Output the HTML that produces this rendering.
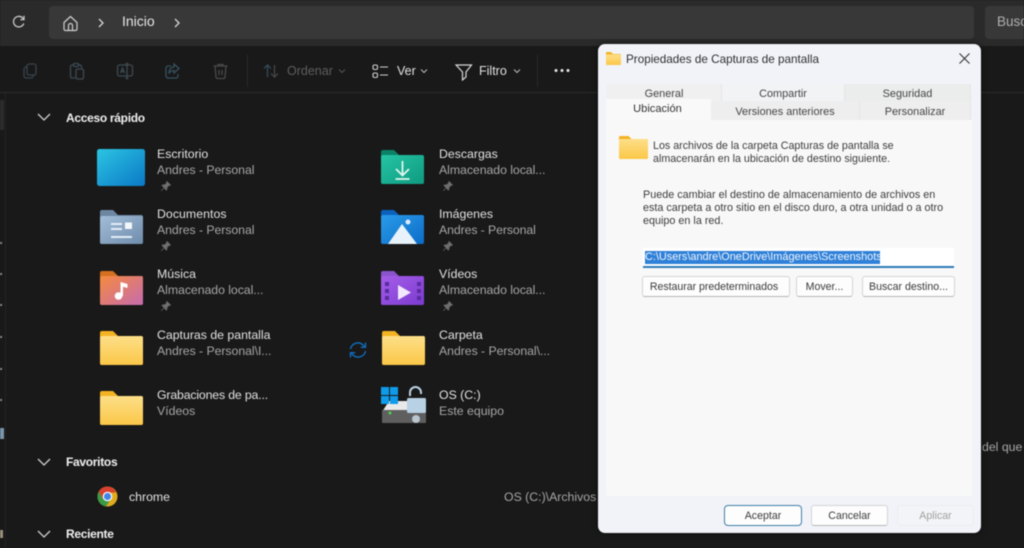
<!DOCTYPE html>
<html lang="es"><head><meta charset="utf-8"><title>Inicio</title>
<style>
html,body{margin:0;padding:0;background:#191919;}
#r{position:relative;width:1024px;height:548px;overflow:hidden;background:#191919;font-family:"Liberation Sans",sans-serif;filter:blur(.45px);}
#r div,#r svg{position:absolute;}
.t{white-space:nowrap;font-size:12.3px;line-height:15px;}
.n{color:#e2e2e2;margin-top:1px;}.s{color:#a6a6a6;margin-top:1px;}
.h{color:#f0f0f0;font-weight:bold;font-size:12px;letter-spacing:-.3px;margin-top:1px;}
.d{color:#3c3c3c;white-space:nowrap;font-size:10.8px;line-height:13px;}
.b{box-sizing:border-box;background:#fdfdfd;border:1px solid #d4d4d4;border-bottom-color:#b5b5b5;border-radius:3px;text-align:center;font-size:10.6px;color:#3a3a3a;white-space:nowrap;}
.tab{box-sizing:border-box;background:#f0f0f1;text-align:center;font-size:10.9px;line-height:19px;color:#444;border-right:1px solid #e6e6e6;white-space:nowrap;}
.l{letter-spacing:-.05px;}
.dot{width:2px;height:2px;left:0;background:#8a8a8a;}
</style></head><body><div id="r">
<svg width="0" height="0" style="left:0;top:0"><defs>
<linearGradient id="fy" x1="0" y1="0" x2="0" y2="1"><stop offset="0" stop-color="#fddf88"/><stop offset="1" stop-color="#fbc748"/></linearGradient>
<linearGradient id="fb" x1="0" y1="0" x2="1" y2="1"><stop offset="0" stop-color="#2bc5e2"/><stop offset="1" stop-color="#0b78c6"/></linearGradient>
<linearGradient id="fg" x1="0" y1="0" x2="1" y2="1"><stop offset="0" stop-color="#25c4a4"/><stop offset="1" stop-color="#0f9a80"/></linearGradient>
<linearGradient id="fi" x1="0" y1="0" x2="1" y2="1"><stop offset="0" stop-color="#2a9be8"/><stop offset="1" stop-color="#0c6cc8"/></linearGradient>
<linearGradient id="fm" x1="0" y1="0" x2="1" y2="1"><stop offset="0" stop-color="#f58a3e"/><stop offset="1" stop-color="#c66bb0"/></linearGradient>
<linearGradient id="fv" x1="0" y1="0" x2="1" y2="1"><stop offset="0" stop-color="#a45ee8"/><stop offset="1" stop-color="#7c3bd0"/></linearGradient>
<linearGradient id="fd" x1="0" y1="0" x2="1" y2="1"><stop offset="0" stop-color="#a2bdd8"/><stop offset="1" stop-color="#6f8cab"/></linearGradient>
<symbol id="pin" viewBox="0 0 12 12"><path d="M7 1l4 4-1 .8-.8-.2-2 2 .1 2-1 1-2.2-2.4L1.500 11 1 10.500l2.800-2.700L1.500 5.500l1-1 2 .1 2-2-.2-.8z" fill="#6e6e6e"/></symbol>
</defs></svg>

<!-- top bar -->
<div style="left:0;top:0;width:1024px;height:46px;background:#2a2a2a"></div>
<div style="left:49px;top:6px;width:925px;height:33px;background:#383838;border-radius:4px"></div>
<div style="left:985px;top:6px;width:39px;height:33px;background:#383838;border-radius:4px 0 0 4px"></div>
<div class="t" style="left:997px;top:14px;color:#b0b0b0;font-size:13.5px">Busc</div>
<svg style="left:11px;top:14px" width="16" height="16" viewBox="0 0 16 16" fill="none" stroke="#c8c8c8" stroke-width="1.300"><path d="M12.800 9.500A5.300 5.300 0 1 1 11.500 3.800L13 5.500"/><path d="M13 1.800v3.800H9.400"/></svg>
<svg style="left:62px;top:15px" width="17" height="17" viewBox="0 0 17 17" fill="none" stroke="#cfcfcf" stroke-width="1.200"><path d="M2 7.500L8.500 1.500 15 7.500V14a1.500 1.500 0 0 1-1.500 1.500H3.500A1.500 1.500 0 0 1 2 14z"/><path d="M6.500 15.500V10.500a2 2 0 0 1 4 0v5"/></svg>
<svg style="left:97px;top:18px" width="8" height="10" viewBox="0 0 8 10" fill="none" stroke="#d5d5d5" stroke-width="1.300"><path d="M2 1l4 4-4 4"/></svg>
<div class="t" style="left:122px;top:14px;color:#e6e6e6;font-size:14px">Inicio</div>
<svg style="left:173px;top:18px" width="8" height="10" viewBox="0 0 8 10" fill="none" stroke="#d5d5d5" stroke-width="1.300"><path d="M2 1l4 4-4 4"/></svg>

<!-- toolbar -->
<div style="left:0;top:92px;width:1024px;height:1px;background:#2c2c2c"></div>
<svg style="left:22px;top:62px" width="16" height="18" viewBox="0 0 16 18" fill="none" stroke="#37444d" stroke-width="1.300"><rect x="5" y="2" width="9" height="11" rx="2"/><path d="M5 5H4a2 2 0 0 0-2 2v7a2 2 0 0 0 2 2h5a2 2 0 0 0 2-2v-1"/></svg>
<svg style="left:69px;top:62px" width="16" height="18" viewBox="0 0 16 18" fill="none" stroke="#3d4a52" stroke-width="1.300"><path d="M5 3H3a1.500 1.500 0 0 0-1.500 1.500v10A1.500 1.500 0 0 0 3 16h3"/><path d="M10 3h1a1.500 1.500 0 0 1 1.500 1.500V6"/><rect x="4.500" y="1.500" width="5" height="3" rx="1"/><rect x="7" y="7" width="7.500" height="10" rx="1.500"/></svg>
<svg style="left:116px;top:62px" width="18" height="18" viewBox="0 0 18 18" fill="none" stroke="#3d4a52" stroke-width="1.300"><rect x="1.500" y="3" width="15" height="11" rx="2"/><path d="M4.500 11l2-5 2 5M5.200 9.500h2.600M11 1.500v15M9.500 1.500h3M9.500 16.500h3"/></svg>
<svg style="left:164px;top:62px" width="17" height="18" viewBox="0 0 17 18" fill="none" stroke="#37505f" stroke-width="1.300"><path d="M7 4H4a2 2 0 0 0-2 2v8a2 2 0 0 0 2 2h8a2 2 0 0 0 2-2v-2"/><path d="M10 2l5 4.500-5 4.500V8.500c-2.500 0-4 1-5 3 0-4 2-6.500 5-6.500z"/></svg>
<svg style="left:212px;top:62px" width="17" height="18" viewBox="0 0 17 18" fill="none" stroke="#4a4a4a" stroke-width="1.300"><path d="M1.500 4h14M6 4V2.500h5V4M3 4l1 11a1.500 1.500 0 0 0 1.500 1.500h6A1.500 1.500 0 0 0 13 15l1-11M7 8v5M10 8v5"/></svg>
<div style="left:247px;top:55px;width:1px;height:32px;background:#2b2b2b"></div>
<svg style="left:262px;top:63px" width="18" height="16" viewBox="0 0 18 16" fill="none" stroke-width="1.200"><path d="M5.500 14V2M2 5.500L5.500 2 9 5.500" stroke="#37505f"/><path d="M12.500 2v12M9 10.500l3.500 3.500 3.500-3.500" stroke="#4a4a4a"/></svg>
<div class="t" style="left:287px;top:64px;color:#5e5e5e;font-size:12.5px">Ordenar</div>
<svg style="left:338px;top:68px" width="8" height="6" viewBox="0 0 8 6" fill="none" stroke="#555" stroke-width="1"><path d="M1 1.500l3 3 3-3"/></svg>
<svg style="left:372px;top:64px" width="18" height="15" viewBox="0 0 18 15" fill="none" stroke="#d0d0d0" stroke-width="1.100"><rect x="1" y="1" width="4.500" height="4.500" rx="1.500"/><rect x="1" y="9" width="4.500" height="4.500" rx="1.500"/><path d="M8 3h8M8 11h8"/></svg>
<div class="t" style="left:397px;top:64px;color:#e0e0e0;font-size:12.5px">Ver</div>
<svg style="left:420px;top:68px" width="8" height="6" viewBox="0 0 8 6" fill="none" stroke="#bbb" stroke-width="1"><path d="M1 1.500l3 3 3-3"/></svg>
<svg style="left:455px;top:63px" width="18" height="18" viewBox="0 0 18 18" fill="none" stroke="#d8d8d8" stroke-width="1.200"><path d="M1 2h15.500L11 9v5l-3.500 3V9z"/></svg>
<div class="t" style="left:479px;top:64px;color:#e0e0e0;font-size:12.5px">Filtro</div>
<svg style="left:513px;top:68px" width="8" height="6" viewBox="0 0 8 6" fill="none" stroke="#bbb" stroke-width="1"><path d="M1 1.500l3 3 3-3"/></svg>
<div style="left:537px;top:55px;width:1px;height:32px;background:#2b2b2b"></div>
<svg style="left:554px;top:68px" width="16" height="5" viewBox="0 0 16 5" fill="#e6e6e6"><circle cx="2" cy="2.500" r="1.500"/><circle cx="8" cy="2.500" r="1.500"/><circle cx="14" cy="2.500" r="1.500"/></svg>

<!-- sidebar sliver -->
<div style="left:0;top:100px;width:4px;height:30px;background:#2c2c2c"></div>
<div style="left:5px;top:93px;width:1px;height:455px;background:#232323"></div>
<div class="dot" style="top:242px"></div><div class="dot" style="top:273px"></div><div class="dot" style="top:304px"></div><div class="dot" style="top:336px"></div><div class="dot" style="top:368px"></div><div class="dot" style="top:399px"></div>
<div style="left:0;top:428px;width:4px;height:11px;background:#7a95ab"></div>
<div style="left:0;top:530px;width:3px;height:8px;background:#9a9080"></div>

<!-- right background hints -->
<div class="t" style="left:982px;top:440px;color:#a8a8a8">del que s</div>

<!-- sections -->
<svg style="left:37px;top:113px" width="14" height="9" viewBox="0 0 14 9" fill="none" stroke="#cfcfcf" stroke-width="1.300"><path d="M1 1l6 6 6-6"/></svg>
<div class="t h" style="left:66px;top:110px">Acceso rápido</div>
<svg style="left:37px;top:458px" width="14" height="9" viewBox="0 0 14 9" fill="none" stroke="#cfcfcf" stroke-width="1.300"><path d="M1 1l6 6 6-6"/></svg>
<div class="t h" style="left:66px;top:454px">Favoritos</div>
<svg style="left:37px;top:530px" width="14" height="9" viewBox="0 0 14 9" fill="none" stroke="#cfcfcf" stroke-width="1.300"><path d="M1 1l6 6 6-6"/></svg>
<div class="t h" style="left:66px;top:526px">Reciente</div>

<!-- Escritorio -->
<svg style="left:97px;top:149px" width="48" height="38" viewBox="0 0 48 38"><rect width="48" height="37" rx="2.500" fill="url(#fb)"/></svg>
<div class="t n" style="left:157px;top:146px">Escritorio</div>
<div class="t s" style="left:157px;top:162px;letter-spacing:-.06px">Andres - Personal</div>
<svg style="left:160px;top:180px" width="12" height="12"><use href="#pin"/></svg>

<!-- Documentos -->
<svg style="left:100px;top:210px" width="43" height="34" viewBox="0 0 43 34"><path d="M2 0h11l5 5h23a2 2 0 0 1 2 2v25a2 2 0 0 1-2 2H2a2 2 0 0 1-2-2V2a2 2 0 0 1 2-2z" fill="#6d87a3"/><rect y="6" width="43" height="28" rx="2" fill="url(#fd)"/><path d="M11 13h11v2H11zM11 18h11v2H11zM11 26h21v2H11z" fill="#e4edf6"/><rect x="25" y="12.500" width="7" height="6.500" fill="#f3f7fb"/></svg>
<div class="t n" style="left:157px;top:206px;letter-spacing:.05px">Documentos</div>
<div class="t s" style="left:157px;top:222px;letter-spacing:-.06px">Andres - Personal</div>
<svg style="left:160px;top:240px" width="12" height="12"><use href="#pin"/></svg>

<!-- Música -->
<svg style="left:100px;top:271px" width="43" height="34" viewBox="0 0 43 34"><path d="M2 0h11l5 5h23a2 2 0 0 1 2 2v25a2 2 0 0 1-2 2H2a2 2 0 0 1-2-2V2a2 2 0 0 1 2-2z" fill="#d4701f"/><rect y="5" width="43" height="29" rx="2" fill="url(#fm)"/><circle cx="18.500" cy="25" r="3.800" fill="#fff"/><path d="M20.500 25V11l7 2v4l-4.500-1.200V25z" fill="#fff"/></svg>
<div class="t n" style="left:157px;top:266px">Música</div>
<div class="t s l" style="left:157px;top:282px">Almacenado local...</div>
<svg style="left:160px;top:300px" width="12" height="12"><use href="#pin"/></svg>

<!-- Capturas -->
<svg style="left:100px;top:331px" width="43" height="34" viewBox="0 0 43 34"><path d="M2 0h11l5 5h23a2 2 0 0 1 2 2v25a2 2 0 0 1-2 2H2a2 2 0 0 1-2-2V2a2 2 0 0 1 2-2z" fill="#f3b322"/><rect y="5" width="43" height="29" rx="2" fill="url(#fy)"/></svg>
<div class="t n" style="left:157px;top:327px">Capturas de pantalla</div>
<div class="t s" style="left:157px;top:343px;letter-spacing:-.05px">Andres - Personal\I...</div>

<!-- Grabaciones -->
<svg style="left:100px;top:391px" width="43" height="34" viewBox="0 0 43 34"><path d="M2 0h11l5 5h23a2 2 0 0 1 2 2v25a2 2 0 0 1-2 2H2a2 2 0 0 1-2-2V2a2 2 0 0 1 2-2z" fill="#f3b322"/><rect y="5" width="43" height="29" rx="2" fill="url(#fy)"/></svg>
<div class="t n" style="left:157px;top:387px;letter-spacing:-.16px">Grabaciones de pa...</div>
<div class="t s" style="left:157px;top:403px">Vídeos</div>

<!-- Descargas -->
<svg style="left:381px;top:150px" width="43" height="34" viewBox="0 0 43 34"><path d="M2 0h11l5 5h23a2 2 0 0 1 2 2v25a2 2 0 0 1-2 2H2a2 2 0 0 1-2-2V2a2 2 0 0 1 2-2z" fill="#0b8267"/><rect y="5" width="43" height="29" rx="2" fill="url(#fg)"/><path d="M21.500 11v14M15 19l6.500 6.500L28 19M14.500 29h14" fill="none" stroke="#dff7ef" stroke-width="1.800"/></svg>
<div class="t n" style="left:439px;top:146px">Descargas</div>
<div class="t s l" style="left:439px;top:162px">Almacenado local...</div>
<svg style="left:442px;top:180px" width="12" height="12"><use href="#pin"/></svg>

<!-- Imágenes -->
<svg style="left:381px;top:210px" width="43" height="34" viewBox="0 0 43 34"><path d="M2 0h11l5 5h23a2 2 0 0 1 2 2v25a2 2 0 0 1-2 2H2a2 2 0 0 1-2-2V2a2 2 0 0 1 2-2z" fill="#0a62bd"/><rect y="5" width="43" height="29" rx="2" fill="url(#fi)"/><path d="M7 34l14-20 15 20z" fill="#e8f2fb"/><circle cx="27" cy="12" r="2.500" fill="#dcecfa"/></svg>
<div class="t n" style="left:439px;top:206px">Imágenes</div>
<div class="t s" style="left:439px;top:222px;letter-spacing:-.1px">Andres - Personal</div>
<svg style="left:442px;top:240px" width="12" height="12"><use href="#pin"/></svg>

<!-- Vídeos -->
<svg style="left:381px;top:271px" width="43" height="34" viewBox="0 0 43 34"><path d="M2 0h11l5 5h23a2 2 0 0 1 2 2v25a2 2 0 0 1-2 2H2a2 2 0 0 1-2-2V2a2 2 0 0 1 2-2z" fill="#8a55cc"/><rect y="5" width="43" height="29" rx="2" fill="url(#fv)"/><path d="M17 14l13 7.500L17 29z" fill="#f3e9ff"/><path d="M4 11h4v4H4zM4 18h4v4H4zM4 25h4v4H4zM36 11h4v4h-4zM36 18h4v4h-4zM36 25h4v4h-4z" fill="#5a2aa0"/></svg>
<div class="t n" style="left:439px;top:266px">Vídeos</div>
<div class="t s l" style="left:439px;top:282px">Almacenado local...</div>
<svg style="left:442px;top:300px" width="12" height="12"><use href="#pin"/></svg>

<!-- Sync + Carpeta -->
<svg style="left:349px;top:341px" width="18" height="18" viewBox="0 0 18 18" fill="none" stroke="#0f6cbd" stroke-width="1.400"><path d="M1.500 8A7.500 7.500 0 0 1 14.500 4.500L16 6"/><path d="M16.500 1.500V6.300H11.800"/><path d="M16.500 10A7.500 7.500 0 0 1 3.500 13.500L2 12"/><path d="M1.500 16.500V11.700H6.200"/></svg>
<svg style="left:382px;top:331px" width="43" height="34" viewBox="0 0 43 34"><path d="M2 0h11l5 5h23a2 2 0 0 1 2 2v25a2 2 0 0 1-2 2H2a2 2 0 0 1-2-2V2a2 2 0 0 1 2-2z" fill="#f3b322"/><rect y="5" width="43" height="29" rx="2" fill="url(#fy)"/></svg>
<div class="t n" style="left:439px;top:327px">Carpeta</div>
<div class="t s" style="left:439px;top:343px;letter-spacing:-.05px">Andres - Personal\...</div>

<!-- OS (C:) -->
<svg style="left:380px;top:386px" width="48" height="38" viewBox="0 0 48 38"><path d="M9 15h28l9 11v9a2 2 0 0 1-2 2H4a2 2 0 0 1-2-2v-9z" fill="#e9e9e9"/><path d="M2 24h44v11a2 2 0 0 1-2 2H4a2 2 0 0 1-2-2z" fill="#5f5f5f"/><circle cx="10" cy="27" r="1.500" fill="#4fd14f"/><path d="M1 1h8v8H1zM10 1h8v8h-8zM1 10h8v8H1zM10 10h8v8h-8z" fill="#0f9bea"/><path d="M30 10V6.500a5.500 5.500 0 0 1 11 0v1.500" fill="none" stroke="#bcd3e6" stroke-width="2"/><rect x="27" y="12" width="19" height="15" rx="1.500" fill="#b9d1e4"/><circle cx="36" cy="33" r="4" fill="#b9c6d0"/></svg>
<div class="t n" style="left:439px;top:387px">OS (C:)</div>
<div class="t s" style="left:439px;top:403px">Este equipo</div>

<!-- chrome -->
<svg style="left:97px;top:486px" width="21" height="21" viewBox="0 0 21 21"><circle cx="10.500" cy="10.500" r="10" fill="#e0aa1f"/><path d="M10.500 .5A10 10 0 0 0 1.800 5.500L6 13 10.500 6.500H19.200A10 10 0 0 0 10.500 .5z" fill="#d9402f"/><path d="M1.800 5.500A10 10 0 0 0 9 20.400L13.500 13.500 6 13z" fill="#3a9a45"/><circle cx="10.500" cy="10.500" r="4.800" fill="#fff"/><circle cx="10.500" cy="10.500" r="3.600" fill="#4285e8"/></svg>
<div class="t n" style="left:129px;top:489px">chrome</div>
<div class="t s" style="left:504px;top:489px">OS (C:)\Archivos de</div>

<!-- dialog -->
<div style="left:598px;top:44px;width:383px;height:489px;background:#f1f3f8;border-radius:7px;box-shadow:0 0 6px rgba(0,0,0,.6)"></div>
<svg style="left:606px;top:52px" width="15" height="13" viewBox="0 0 15 13"><path d="M1 0h4l2 2h7a1 1 0 0 1 1 1v9a1 1 0 0 1-1 1H1a1 1 0 0 1-1-1V1a1 1 0 0 1 1-1z" fill="#f3b322"/><rect y="2.500" width="15" height="10.500" rx="1" fill="url(#fy)"/></svg>
<div class="t" style="left:626px;top:52px;color:#2e2e2e;font-size:11.7px">Propiedades de Capturas de pantalla</div>
<svg style="left:959px;top:53px" width="11" height="11" viewBox="0 0 11 11" fill="none" stroke="#333" stroke-width="1.100"><path d="M.5.500l10 10M10.500.500l-10 10"/></svg>

<!-- tabs -->
<div class="tab" style="left:607px;top:84px;width:115px;height:17px;line-height:20px">General</div>
<div class="tab" style="left:722px;top:84px;width:123px;height:17px;line-height:20px;background:#f2f3f5">Compartir</div>
<div class="tab" style="left:845px;top:84px;width:126px;height:17px;line-height:20px;background:#ebecec">Seguridad</div>
<div class="tab" style="left:711px;top:101px;width:149px;height:19px;line-height:22px;background:#eeeeee">Versiones anteriores</div>
<div class="tab" style="left:860px;top:101px;width:111px;height:19px;line-height:22px;background:#eeeeee">Personalizar</div>
<div class="tab" style="left:606px;top:99px;width:105px;height:22px;line-height:21px;background:#f9f9f9;color:#333;border:0;font-size:11.1px;padding-right:2px">Ubicación</div>

<!-- panel -->
<div style="left:606px;top:120px;width:366px;height:376px;background:#f8f8f8"></div>
<svg style="left:619px;top:136px" width="29" height="23" viewBox="0 0 29 23"><path d="M1.500 0h8l3 3h15a1.500 1.500 0 0 1 1.500 1.500v17a1.500 1.500 0 0 1-1.500 1.500h-26A1.500 1.500 0 0 1 0 21.500v-20A1.500 1.500 0 0 1 1.500 0z" fill="#f3b322"/><rect y="3" width="29" height="20" rx="1" fill="url(#fy)"/></svg>
<div class="d" style="left:653px;top:140px;font-size:10.7px">Los archivos de la carpeta Capturas de pantalla se</div>
<div class="d" style="left:653px;top:153px;font-size:10.7px">almacenarán en la ubicación de destino siguiente.</div>
<div class="d" style="left:643px;top:189px">Puede cambiar el destino de almacenamiento de archivos en</div>
<div class="d" style="left:643px;top:202px">esta carpeta a otro sitio en el disco duro, a otra unidad o a otro</div>
<div class="d" style="left:643px;top:215px">equipo en la red.</div>

<div style="left:643px;top:248px;width:311px;height:18px;background:#fff"></div>
<div style="left:643px;top:266px;width:311px;height:2px;background:#2b7ab8"></div>
<div style="left:645px;top:251px;width:235px;height:13px;background:#2f80d8"></div>
<div class="t" style="left:645px;top:250px;color:#f2f6fb;font-size:10.9px">C:\Users\andre\OneDrive\Imágenes\Screenshots</div>

<div class="b" style="left:642px;top:276px;width:148px;height:21px;line-height:21px;padding-right:4px;letter-spacing:-.03px">Restaurar predeterminados</div>
<div class="b" style="left:796px;top:276px;width:57px;height:21px;line-height:21px">Mover...</div>
<div class="b" style="left:862px;top:276px;width:93px;height:21px;line-height:21px">Buscar destino...</div>

<div class="b" style="left:724px;top:505px;width:78px;height:21px;line-height:20px;border:1.5px solid #3f7fa8;border-radius:4px">Aceptar</div>
<div class="b" style="left:811px;top:505px;width:77px;height:21px;line-height:21px">Cancelar</div>
<div class="b" style="left:897px;top:505px;width:77px;height:21px;line-height:21px;background:#f3f4f7;border-color:#ececec;color:#a0a0a0">Aplicar</div>
</div></body></html>
